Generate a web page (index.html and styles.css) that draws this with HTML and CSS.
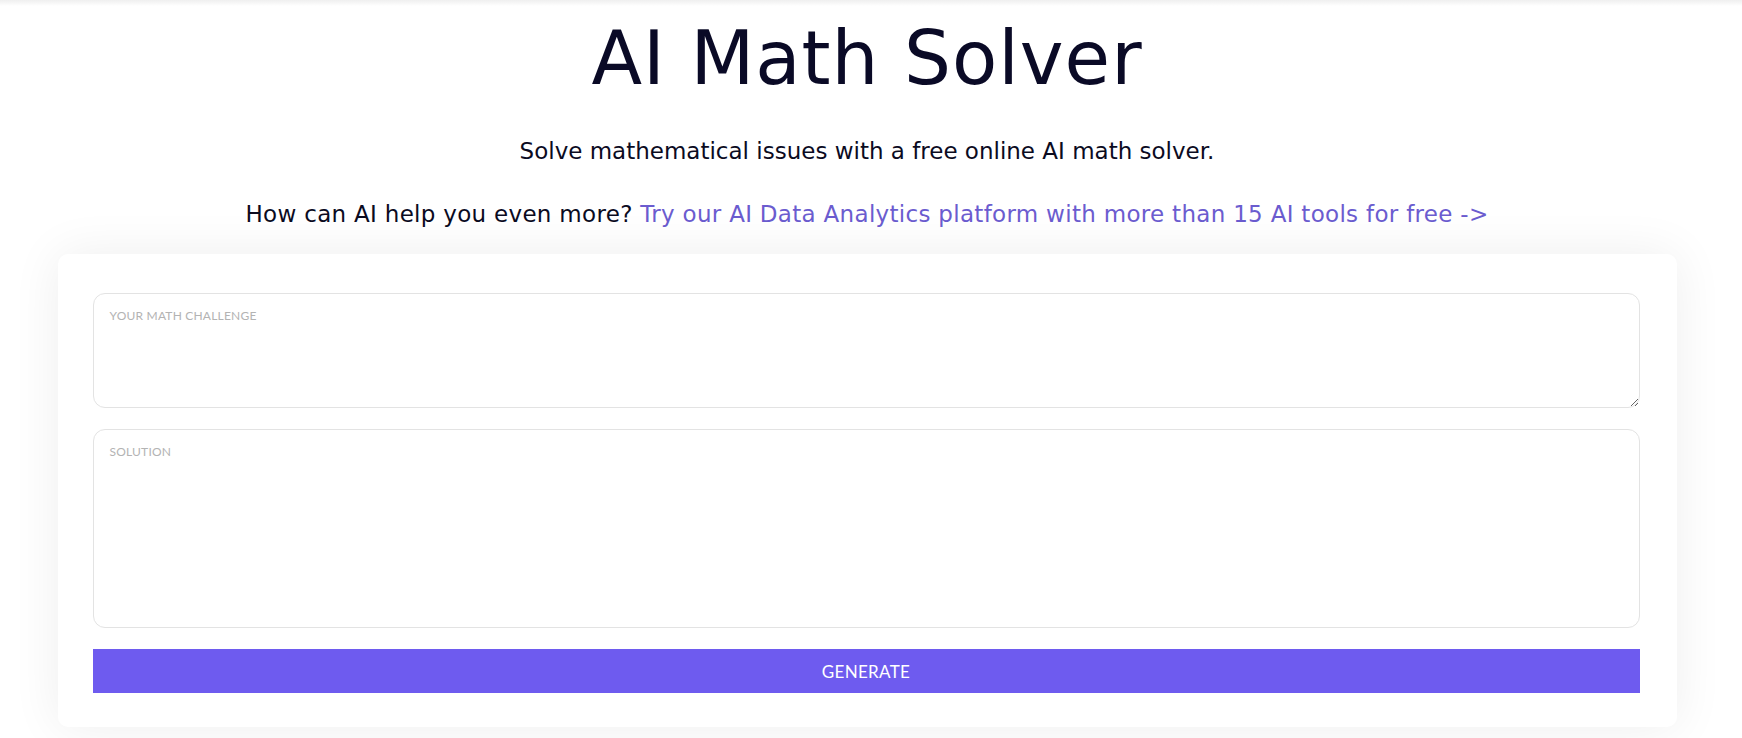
FILE: index.html
```html
<!DOCTYPE html>
<html lang="en">
<head>
<meta charset="utf-8">
<title>AI Math Solver</title>
<link rel="stylesheet" href="styles.css">
</head>
<body>
<div class="topbar"></div>
<main class="page">
  <header class="hero">
    <h1 class="title">AI Math Solver</h1>
    <p class="subtitle">Solve mathematical issues with a free online AI math solver.</p>
    <p class="promo">How can AI help you even more? <a class="promo-link" href="#">Try our AI Data Analytics platform with more than 15 AI tools for free -&gt;</a></p>
  </header>
  <section class="card">
    <textarea class="field field-input" placeholder="YOUR MATH CHALLENGE"></textarea>
    <div class="field field-output"><span class="field-label">SOLUTION</span></div>
    <button class="generate" type="button">GENERATE</button>
  </section>
</main>
</body>
</html>
```

FILE: styles.css
```css
* { box-sizing: border-box; }

html, body {
  margin: 0;
  padding: 0;
  background: #ffffff;
}

body {
  font-family: "DejaVu Sans", "Noto Sans", sans-serif;
  color: #0b0b26;
  overflow: hidden;
  height: 738px;
}

.topbar {
  height: 6px;
  background: linear-gradient(#efefef, #ffffff);
}

.page {
  display: flex;
  flex-direction: column;
  align-items: center;
  padding-right: 8px;
}

.hero {
  display: flex;
  flex-direction: column;
  align-items: center;
  text-align: center;
}

.title {
  margin: 12px 0 0;
  font-size: 74px;
  line-height: 80px;
  font-weight: 400;
  color: #0a0a26;
  letter-spacing: 1px;
}

.subtitle {
  margin: 38px 0 0;
  font-size: 23px;
  line-height: 30px;
  color: #0b0b1f;
}

.promo {
  margin: 33px 0 0;
  font-size: 23px;
  line-height: 30px;
  letter-spacing: 0.3px;
  color: #0b0b1f;
}

.promo-link {
  color: #6b5ccf;
  text-decoration: none;
}

.card {
  margin-top: 25px;
  width: 1619px;
  background: #ffffff;
  border-radius: 10px;
  box-shadow: 0 0 50px rgba(0, 0, 0, 0.07);
  padding: 39px 37px 34px 35px;
  display: flex;
  flex-direction: column;
  gap: 21px;
}

.field {
  width: 100%;
  border: 1px solid #e3e3e3;
  border-radius: 12px;
  background: #ffffff;
  padding: 13px 16px;
  font-family: "Lato", "Noto Sans", sans-serif;
  font-size: 12px;
  line-height: 18px;
  letter-spacing: 0.2px;
}

.field-input {
  height: 115px;
  resize: vertical;
  display: block;
  outline: none;
  color: #333;
}

.field-input::placeholder {
  color: #b3b3b3;
}

.field-output {
  height: 199px;
}

.field-label {
  color: #b3b3b3;
}

.generate {
  height: 44px;
  width: 100%;
  border: none;
  border-radius: 0;
  background: #6e5bef;
  color: #ffffff;
  font-family: "Lato", "Noto Sans", sans-serif;
  font-size: 17px;
  letter-spacing: 0.3px;
  cursor: pointer;
}
```
